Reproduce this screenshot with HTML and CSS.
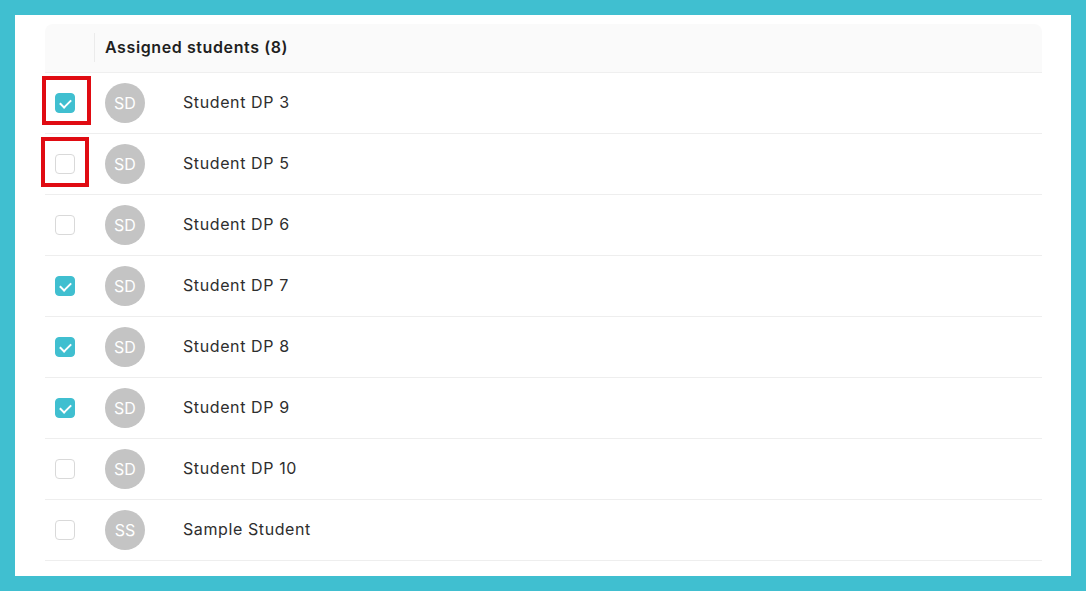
FILE: index.html
```html
<!DOCTYPE html>
<html lang="en">
  <head>
    <meta charset="UTF-8">
    <meta name="viewport" content="width=device-width, initial-scale=1.0">
    <title>Assigned students</title>
    <link rel="stylesheet" href="styles.css">
  </head>
  <body>
    <div class="panel">
      <div class="table">
        <div class="row head">
          <div class="cell check-col"></div>
          <div class="cell title">Assigned students (8)</div>
        </div>

        <div class="row">
          <div class="cell check-col"><span class="checkbox checked"></span></div>
          <div class="cell"><span class="avatar">SD</span></div>
          <div class="cell name">Student DP 3</div>
        </div>
        <div class="row">
          <div class="cell check-col"><span class="checkbox"></span></div>
          <div class="cell"><span class="avatar">SD</span></div>
          <div class="cell name">Student DP 5</div>
        </div>
        <div class="row">
          <div class="cell check-col"><span class="checkbox"></span></div>
          <div class="cell"><span class="avatar">SD</span></div>
          <div class="cell name">Student DP 6</div>
        </div>
        <div class="row">
          <div class="cell check-col"><span class="checkbox checked"></span></div>
          <div class="cell"><span class="avatar">SD</span></div>
          <div class="cell name">Student DP 7</div>
        </div>
        <div class="row">
          <div class="cell check-col"><span class="checkbox checked"></span></div>
          <div class="cell"><span class="avatar">SD</span></div>
          <div class="cell name">Student DP 8</div>
        </div>
        <div class="row">
          <div class="cell check-col"><span class="checkbox checked"></span></div>
          <div class="cell"><span class="avatar">SD</span></div>
          <div class="cell name">Student DP 9</div>
        </div>
        <div class="row">
          <div class="cell check-col"><span class="checkbox"></span></div>
          <div class="cell"><span class="avatar">SD</span></div>
          <div class="cell name">Student DP 10</div>
        </div>
        <div class="row">
          <div class="cell check-col"><span class="checkbox"></span></div>
          <div class="cell"><span class="avatar">SS</span></div>
          <div class="cell name">Sample Student</div>
        </div>

        <!-- highlight marks -->
        <div class="mark mark-1"></div>
        <div class="mark mark-2"></div>
      </div>
    </div>
  </body>
</html>
```

FILE: styles.css
```css
html, body {
    margin: 0;
    height: 100%;
}
body {
    background-color: #40bfd0;
    padding: 15px;
    box-sizing: border-box;
    font-family: 'Inter', 'Noto Sans', sans-serif;
    color: #2a2a2a;
}
.panel {
    background: white;
    height: 561px;
    width: 1056px;
    padding: 9px 29px 0 30px;
    box-sizing: border-box;
}
.table {
    position: relative;
    width: 997px;
}
.row {
    display: grid;
    grid-template-columns: 50px 88px 1fr;
    height: 61px;
    border-bottom: 1px solid #eeeeee;
    box-sizing: border-box;
    align-items: center;
}
.row.head {
    height: 49px;
    background-color: #fafafa;
    border-radius: 8px 8px 0 0;
    border-bottom-color: #efefef;
}
.cell {
    padding-left: 10px;
    display: flex;
    align-items: center;
}
.check-col {
    position: relative;
    height: 100%;
}
.head .check-col::after {
    content: '';
    position: absolute;
    right: 0;
    top: 9px;
    width: 1px;
    height: 29px;
    background-color: #ebebeb;
}
.title {
    grid-column: 2 / 4;
    font-size: 16px;
    font-weight: 600;
    color: #1f1f1f;
    letter-spacing: 0.6px;
    margin-top: -2px;
}
.checkbox {
    width: 20px;
    height: 20px;
    border: 1px solid #d9d9d9;
    border-radius: 4px;
    box-sizing: border-box;
    background: white;
    position: relative;
}
.checkbox.checked {
    background-color: #40bfd0;
    border-color: #40bfd0;
}
.checkbox.checked::after {
    content: '';
    position: absolute;
    left: 6px;
    top: 3px;
    width: 5px;
    height: 9px;
    border: solid white;
    border-width: 0 2px 2px 0;
    transform: rotate(45deg);
}
.avatar {
    width: 40px;
    height: 40px;
    border-radius: 50%;
    background-color: #c4c4c4;
    color: white;
    font-size: 16px;
    display: flex;
    align-items: center;
    justify-content: center;
}
.name {
    padding-left: 0;
    font-size: 16px;
    color: #2e2e2e;
    letter-spacing: 0.6px;
    margin-top: -2px;
}
.mark {
    position: absolute;
    border: 4px solid #e00b12;
    box-sizing: border-box;
}
.mark-1 {
    left: -3px;
    top: 52px;
    width: 49px;
    height: 49px;
}
.mark-2 {
    left: -4px;
    top: 113px;
    width: 48px;
    height: 50px;
}
```
